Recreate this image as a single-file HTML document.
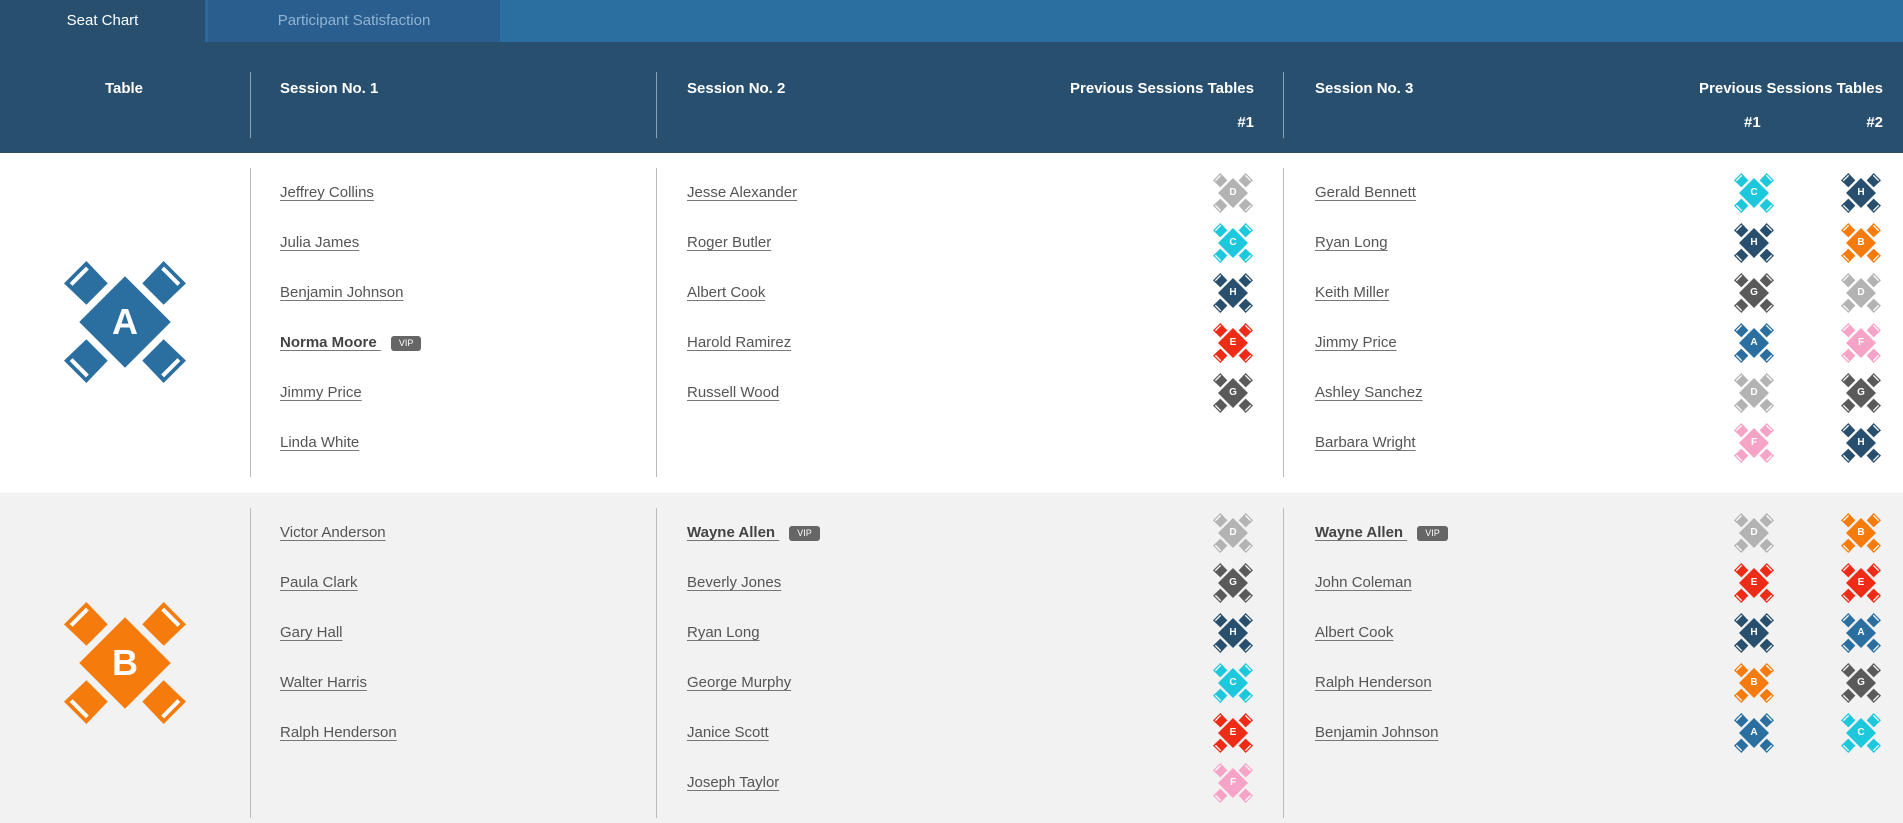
<!DOCTYPE html>
<html><head><meta charset="utf-8"><style>
*{margin:0;padding:0;box-sizing:border-box}
body{width:1903px;height:823px;position:relative;overflow:hidden;background:#fff;font-family:"Liberation Sans",sans-serif}
.a{position:absolute}
.h{color:#fff;font-weight:bold;font-size:15px;line-height:18px;white-space:nowrap}
.n{position:absolute;font-size:15px;color:#555;text-decoration:underline;text-decoration-color:#777;text-underline-offset:3px;line-height:18px;white-space:nowrap;transform:translateY(-9px)}
.n b{color:#444}
.vip{display:inline-block;background:#666;color:#fff;font-size:9px;line-height:14px;height:15px;border-radius:3px;padding:0 8px;margin-left:10px;vertical-align:1px;text-decoration:none}
.vl{position:absolute;width:1px;background:#bbb}
.ic{position:absolute;width:40px;height:40px;margin:-20px 0 0 -20px}
.ic svg,.big svg{position:absolute;left:0;top:0;width:100%;height:100%}
.ic span{position:absolute;left:0;top:0;width:40px;line-height:40px;text-align:center;color:#fff;font-size:10px;font-weight:bold}
.big{position:absolute;width:122px;height:122px;margin:-61px 0 0 -61px}
.big span{position:absolute;left:0;top:0;width:122px;line-height:122px;text-align:center;color:#fff;font-size:36px;font-weight:bold}
</style></head><body>
<svg width="0" height="0" style="position:absolute"><defs><symbol id="ic" viewBox="0 0 120 120">
<polygon points="60,15 105,60 60,105 15,60" fill="currentColor"/>
<polygon points="22,0 43,22 22,43 0,22" fill="currentColor"/>
<polygon points="98,0 120,22 98,43 77,22" fill="currentColor"/>
<polygon points="22,77 43,98 22,120 0,98" fill="currentColor"/>
<polygon points="98,77 120,98 98,120 77,98" fill="currentColor"/>
<line x1="7" y1="23" x2="23" y2="7" stroke="#fff" stroke-width="4"/>
<line x1="97" y1="7" x2="113" y2="23" stroke="#fff" stroke-width="4"/>
<line x1="7" y1="97" x2="23" y2="113" stroke="#fff" stroke-width="4"/>
<line x1="113" y1="97" x2="97" y2="113" stroke="#fff" stroke-width="4"/>
</symbol></defs></svg>

<div class="a" style="left:0;top:0;width:1903px;height:42px;background:#2a6fa0"></div>
<div class="a" style="left:0;top:0;width:205px;height:42px;background:#284f6e"></div>
<div class="a" style="left:205px;top:0;width:295px;height:42px;background:#2a5e8f;border-left:3px solid #2a6aa0"></div>
<div class="a" style="left:0;top:0;width:205px;line-height:42px;text-align:center;color:#fff;font-size:15px">Seat Chart</div>
<div class="a" style="left:208px;top:0;width:292px;line-height:42px;text-align:center;color:#8fb3d3;font-size:15px">Participant Satisfaction</div>

<div class="a" style="left:0;top:42px;width:1903px;height:111px;background:#284f6e"></div>
<div class="vl" style="left:250px;top:72px;height:66px;background:#8aa2b8"></div>
<div class="vl" style="left:656px;top:72px;height:66px;background:#8aa2b8"></div>
<div class="vl" style="left:1283px;top:72px;height:66px;background:#8aa2b8"></div>
<div class="a h" style="left:74px;top:80px;width:100px;text-align:center">Table</div>
<div class="a h" style="left:280px;top:80px">Session No. 1</div>
<div class="a h" style="left:687px;top:80px">Session No. 2</div>
<div class="a h" style="right:649px;top:80px">Previous Sessions Tables</div>
<div class="a h" style="right:649px;top:114px">#1</div>
<div class="a h" style="left:1315px;top:80px">Session No. 3</div>
<div class="a h" style="right:20px;top:80px">Previous Sessions Tables</div>
<div class="a h" style="left:1744px;top:114px">#1</div>
<div class="a h" style="right:20px;top:114px">#2</div>

<div class="a" style="left:0;top:493px;width:1903px;height:330px;background:#f2f2f2"></div>
<div class="vl" style="left:250px;top:168px;height:309px"></div>
<div class="vl" style="left:656px;top:168px;height:309px"></div>
<div class="vl" style="left:1283px;top:168px;height:309px"></div>
<div class="vl" style="left:250px;top:508px;height:310px"></div>
<div class="vl" style="left:656px;top:508px;height:310px"></div>
<div class="vl" style="left:1283px;top:508px;height:310px"></div>

<div class="big" style="left:125px;top:322px;color:#2a6fa0"><svg><use href="#ic"/></svg><span>A</span></div>
<div class="big" style="left:125px;top:663px;color:#f57c0c"><svg><use href="#ic"/></svg><span>B</span></div>

<div class="n" style="left:280px;top:193px">Jeffrey Collins</div>
<div class="n" style="left:280px;top:243px">Julia James</div>
<div class="n" style="left:280px;top:293px">Benjamin Johnson</div>
<div class="n" style="left:280px;top:343px"><b>Norma Moore </b><span class="vip">VIP</span></div>
<div class="n" style="left:280px;top:393px">Jimmy Price</div>
<div class="n" style="left:280px;top:443px">Linda White</div>

<div class="n" style="left:687px;top:193px">Jesse Alexander</div>
<div class="n" style="left:687px;top:243px">Roger Butler</div>
<div class="n" style="left:687px;top:293px">Albert Cook</div>
<div class="n" style="left:687px;top:343px">Harold Ramirez</div>
<div class="n" style="left:687px;top:393px">Russell Wood</div>

<div class="n" style="left:1315px;top:193px">Gerald Bennett</div>
<div class="n" style="left:1315px;top:243px">Ryan Long</div>
<div class="n" style="left:1315px;top:293px">Keith Miller</div>
<div class="n" style="left:1315px;top:343px">Jimmy Price</div>
<div class="n" style="left:1315px;top:393px">Ashley Sanchez</div>
<div class="n" style="left:1315px;top:443px">Barbara Wright</div>

<div class="ic" style="left:1233px;top:193px;color:#b3b3b3"><svg><use href="#ic"/></svg><span>D</span></div>
<div class="ic" style="left:1233px;top:243px;color:#1ec8dc"><svg><use href="#ic"/></svg><span>C</span></div>
<div class="ic" style="left:1233px;top:293px;color:#284f6e"><svg><use href="#ic"/></svg><span>H</span></div>
<div class="ic" style="left:1233px;top:343px;color:#ee2b16"><svg><use href="#ic"/></svg><span>E</span></div>
<div class="ic" style="left:1233px;top:393px;color:#5a5a5a"><svg><use href="#ic"/></svg><span>G</span></div>

<div class="ic" style="left:1754px;top:193px;color:#1ec8dc"><svg><use href="#ic"/></svg><span>C</span></div>
<div class="ic" style="left:1754px;top:243px;color:#284f6e"><svg><use href="#ic"/></svg><span>H</span></div>
<div class="ic" style="left:1754px;top:293px;color:#5a5a5a"><svg><use href="#ic"/></svg><span>G</span></div>
<div class="ic" style="left:1754px;top:343px;color:#2a6fa0"><svg><use href="#ic"/></svg><span>A</span></div>
<div class="ic" style="left:1754px;top:393px;color:#b3b3b3"><svg><use href="#ic"/></svg><span>D</span></div>
<div class="ic" style="left:1754px;top:443px;color:#f5a3c7"><svg><use href="#ic"/></svg><span>F</span></div>

<div class="ic" style="left:1861px;top:193px;color:#284f6e"><svg><use href="#ic"/></svg><span>H</span></div>
<div class="ic" style="left:1861px;top:243px;color:#f57c0c"><svg><use href="#ic"/></svg><span>B</span></div>
<div class="ic" style="left:1861px;top:293px;color:#b3b3b3"><svg><use href="#ic"/></svg><span>D</span></div>
<div class="ic" style="left:1861px;top:343px;color:#f5a3c7"><svg><use href="#ic"/></svg><span>F</span></div>
<div class="ic" style="left:1861px;top:393px;color:#5a5a5a"><svg><use href="#ic"/></svg><span>G</span></div>
<div class="ic" style="left:1861px;top:443px;color:#284f6e"><svg><use href="#ic"/></svg><span>H</span></div>

<div class="n" style="left:280px;top:533px">Victor Anderson</div>
<div class="n" style="left:280px;top:583px">Paula Clark</div>
<div class="n" style="left:280px;top:633px">Gary Hall</div>
<div class="n" style="left:280px;top:683px">Walter Harris</div>
<div class="n" style="left:280px;top:733px">Ralph Henderson</div>

<div class="n" style="left:687px;top:533px"><b>Wayne Allen </b><span class="vip">VIP</span></div>
<div class="n" style="left:687px;top:583px">Beverly Jones</div>
<div class="n" style="left:687px;top:633px">Ryan Long</div>
<div class="n" style="left:687px;top:683px">George Murphy</div>
<div class="n" style="left:687px;top:733px">Janice Scott</div>
<div class="n" style="left:687px;top:783px">Joseph Taylor</div>

<div class="n" style="left:1315px;top:533px"><b>Wayne Allen </b><span class="vip">VIP</span></div>
<div class="n" style="left:1315px;top:583px">John Coleman</div>
<div class="n" style="left:1315px;top:633px">Albert Cook</div>
<div class="n" style="left:1315px;top:683px">Ralph Henderson</div>
<div class="n" style="left:1315px;top:733px">Benjamin Johnson</div>

<div class="ic" style="left:1233px;top:533px;color:#b3b3b3"><svg><use href="#ic"/></svg><span>D</span></div>
<div class="ic" style="left:1233px;top:583px;color:#5a5a5a"><svg><use href="#ic"/></svg><span>G</span></div>
<div class="ic" style="left:1233px;top:633px;color:#284f6e"><svg><use href="#ic"/></svg><span>H</span></div>
<div class="ic" style="left:1233px;top:683px;color:#1ec8dc"><svg><use href="#ic"/></svg><span>C</span></div>
<div class="ic" style="left:1233px;top:733px;color:#ee2b16"><svg><use href="#ic"/></svg><span>E</span></div>
<div class="ic" style="left:1233px;top:783px;color:#f5a3c7"><svg><use href="#ic"/></svg><span>F</span></div>

<div class="ic" style="left:1754px;top:533px;color:#b3b3b3"><svg><use href="#ic"/></svg><span>D</span></div>
<div class="ic" style="left:1754px;top:583px;color:#ee2b16"><svg><use href="#ic"/></svg><span>E</span></div>
<div class="ic" style="left:1754px;top:633px;color:#284f6e"><svg><use href="#ic"/></svg><span>H</span></div>
<div class="ic" style="left:1754px;top:683px;color:#f57c0c"><svg><use href="#ic"/></svg><span>B</span></div>
<div class="ic" style="left:1754px;top:733px;color:#2a6fa0"><svg><use href="#ic"/></svg><span>A</span></div>

<div class="ic" style="left:1861px;top:533px;color:#f57c0c"><svg><use href="#ic"/></svg><span>B</span></div>
<div class="ic" style="left:1861px;top:583px;color:#ee2b16"><svg><use href="#ic"/></svg><span>E</span></div>
<div class="ic" style="left:1861px;top:633px;color:#2a6fa0"><svg><use href="#ic"/></svg><span>A</span></div>
<div class="ic" style="left:1861px;top:683px;color:#5a5a5a"><svg><use href="#ic"/></svg><span>G</span></div>
<div class="ic" style="left:1861px;top:733px;color:#1ec8dc"><svg><use href="#ic"/></svg><span>C</span></div>
</body></html>
